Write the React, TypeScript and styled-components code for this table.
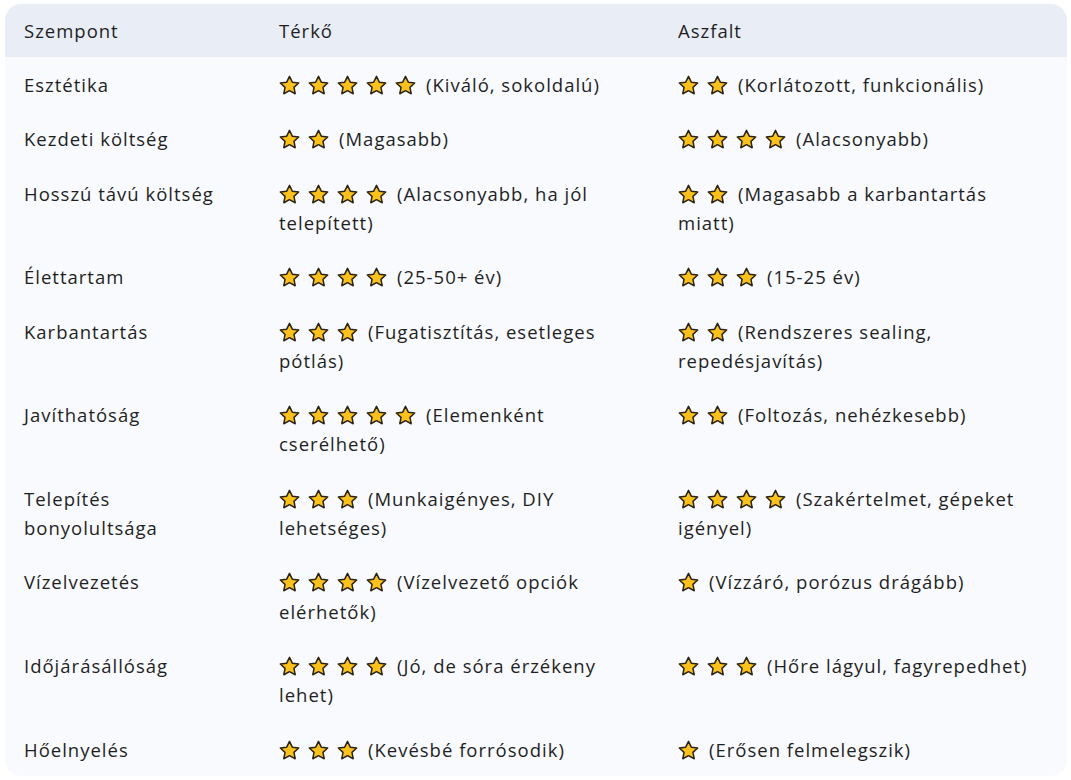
import styled, { createGlobalStyle } from "styled-components"

const Global = createGlobalStyle`
    html, body {
        margin: 0;
        background: #ffffff;
    }
    body {
        font-family: "Open Sans", Roboto, sans-serif;
        color: #1f1f1f;
    }
`

const Page = styled.div`
    padding: 4px 4px 0 5px;
`

const Table = styled.table`
    width: 1062px;
    border-collapse: separate;
    border-spacing: 0;
    table-layout: fixed;
    background: #f8fafd;
    border-radius: 16px;
    overflow: hidden;
    font-size: 18.5px;
    letter-spacing: 1px;
    line-height: 29.2px;
`

const Head = styled.thead`
    background: #e9eef6;
`

const Th = styled.th<{ $w?: number }>`
    box-sizing: border-box;
    width: ${(p) => (p.$w ? `${p.$w}px` : "auto")};
    text-align: left;
    font-weight: 400;
    padding: 11.6px 30px 12.4px 19px;
`

const Td = styled.td`
    vertical-align: top;
    padding: 12.6px 30px 12.6px 19px;
`

const StarRow = styled.span`
    display: inline-flex;
    gap: 8px;
    margin-right: 10px;
    vertical-align: -4px;
`

const Star = () => (
    <svg width="21" height="21" viewBox="0 0 24 24">
        <path
            d="M12 1.5l3.2 6.7 7.3.9-5.4 5 1.4 7.3L12 17.9l-6.5 3.5 1.4-7.3-5.4-5 7.3-.9z"
            fill="#fcc21b"
            stroke="#2b2314"
            strokeWidth="1.7"
            strokeLinejoin="round"
        />
    </svg>
)

function Rating({ n, text }: { n: number; text: string }) {
    return (
        <>
            <StarRow>
                {Array.from({ length: n }, (_, i) => (
                    <Star key={i} />
                ))}
            </StarRow>
            {text}
        </>
    )
}

const rows: [string, number, string, number, string][] = [
    ["Esztétika", 5, "(Kiváló, sokoldalú)", 2, "(Korlátozott, funkcionális)"],
    ["Kezdeti költség", 2, "(Magasabb)", 4, "(Alacsonyabb)"],
    ["Hosszú távú költség", 4, "(Alacsonyabb, ha jól telepített)", 2, "(Magasabb a karbantartás miatt)"],
    ["Élettartam", 4, "(25-50+ év)", 3, "(15-25 év)"],
    ["Karbantartás", 3, "(Fugatisztítás, esetleges pótlás)", 2, "(Rendszeres sealing, repedésjavítás)"],
    ["Javíthatóság", 5, "(Elemenként cserélhető)", 2, "(Foltozás, nehézkesebb)"],
    ["Telepítés bonyolultsága", 3, "(Munkaigényes, DIY lehetséges)", 4, "(Szakértelmet, gépeket igényel)"],
    ["Vízelvezetés", 4, "(Vízelvezető opciók elérhetők)", 1, "(Vízzáró, porózus drágább)"],
    ["Időjárásállóság", 4, "(Jó, de sóra érzékeny lehet)", 3, "(Hőre lágyul, fagyrepedhet)"],
    ["Hőelnyelés", 3, "(Kevésbé forrósodik)", 1, "(Erősen felmelegszik)"],
]

export default function App() {
    return (
        <Page>
            <Global />
            <Table>
                <Head>
                    <tr>
                        <Th $w={255}>Szempont</Th>
                        <Th $w={399}>Térkő</Th>
                        <Th>Aszfalt</Th>
                    </tr>
                </Head>
                <tbody>
                    {rows.map(([name, a, at, b, bt]) => (
                        <tr key={name}>
                            <Td>{name}</Td>
                            <Td>
                                <Rating n={a} text={at} />
                            </Td>
                            <Td>
                                <Rating n={b} text={bt} />
                            </Td>
                        </tr>
                    ))}
                </tbody>
            </Table>
        </Page>
    )
}
